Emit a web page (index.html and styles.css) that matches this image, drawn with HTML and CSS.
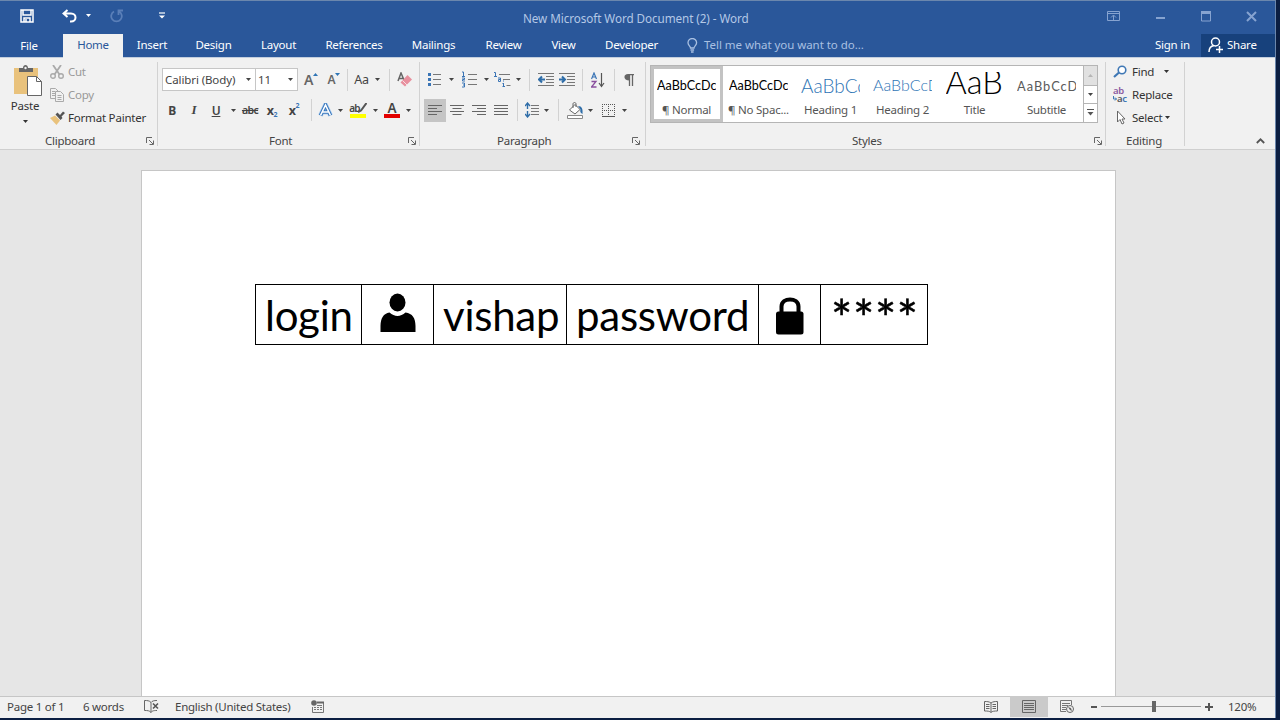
FILE: index.html
```html
<!DOCTYPE html>
<html lang="en">
<head>
  <meta charset="UTF-8" />
  <meta name="viewport" content="width=device-width, initial-scale=1" />
  <title>New Microsoft Word Document (2) - Word</title>
  <link rel="stylesheet" href="styles.css">
</head>
<body>
  <svg class="defs" width="0" height="0">
    <symbol id="caret" viewBox="0 0 5 3"><path d="M0 0h5L2.500 3z" fill="currentColor"/></symbol>
    <symbol id="launcher" viewBox="0 0 8 8"><path d="M.5 6V.5H6M3 3l4 4M7.500 3.500v4h-4" fill="none" stroke="#666"/></symbol>
  </svg>

  <div class="window">
    <header class="titlebar">
      <div class="quick">
        <svg class="save" width="14" height="14" viewBox="0 0 14 14"><path d="M1 1h12v12H1zM3 1v5h8V1M4 13V9h6v4M6 10v3" fill="none" stroke="#fff" stroke-width="1.500"/></svg>
        <svg class="undo" width="15" height="14" viewBox="0 0 15 14"><path d="M5.500 1L1.500 4.500l4 3.500M2 4.500h7c6 0 6 8 0 8H8" fill="none" stroke="#fff" stroke-width="2"/></svg>
        <svg class="undo-caret" width="5" height="3"><use href="#caret"/></svg>
        <svg class="redo" width="14" height="14" viewBox="0 0 14 14"><path d="M9 2.500A5.300 5.300 0 1 1 4 2.500M8.500 6V1.500H13" fill="none" stroke="#5a7fb8" stroke-width="1.800"/></svg>
        <svg width="6" height="7" viewBox="0 0 6 7"><path d="M0 1h6" stroke="#fff" stroke-width="1.200"/><path d="M0 3.500h6L3 6.500z" fill="#fff"/></svg>
      </div>
      <div class="title">New Microsoft Word Document (2) - Word</div>
      <div class="controls">
        <svg width="14" height="11" viewBox="0 0 14 11"><path d="M.5.5h12v9H.5zM.5 2.500h12M6.500 9V4.500M4 6.500L6.500 4 9 6.500" fill="none" stroke="currentColor"/></svg>
        <svg width="10" height="11" viewBox="0 0 10 11"><path d="M0 7h9" stroke="currentColor" stroke-width="2"/></svg>
        <svg width="10" height="11" viewBox="0 0 10 11"><path d="M.5 1v9h9V1" fill="none" stroke="currentColor"/><path d="M0 1.500h10" stroke="currentColor" stroke-width="3"/></svg>
        <svg width="11" height="11" viewBox="0 0 11 11"><path d="M1 1l9 9M10 1l-9 9" stroke="currentColor" stroke-width="2"/></svg>
      </div>
    </header>

    <nav class="tabs">
      <span class="tab file">File</span>
      <span class="tab home">Home</span>
      <span class="tab insert">Insert</span>
      <span class="tab design">Design</span>
      <span class="tab layout">Layout</span>
      <span class="tab references">References</span>
      <span class="tab mailings">Mailings</span>
      <span class="tab review">Review</span>
      <span class="tab view">View</span>
      <span class="tab developer">Developer</span>
      <span class="tell">
        <svg width="11" height="15" viewBox="0 0 11 15"><path d="M3.500 10C3.500 8 1 7.500 1 4.800a4.300 4.300 0 0 1 8.600 0C9.600 7.500 7 8 7 10zM3.500 12h3.600M4 14h2.600" fill="none" stroke="#a9c0e2" stroke-width="1.300"/></svg>
        Tell me what you want to do...
      </span>
      <span class="signin">Sign in</span>
      <span class="share">
        <svg width="15" height="16" viewBox="0 0 15 16"><circle cx="7.500" cy="5" r="4" fill="none" stroke="#fff" stroke-width="1.500"/><path d="M1 15c0-4 2-6 5-6.500M8 12.500h7M11.500 9v7" fill="none" stroke="#fff" stroke-width="1.500"/></svg>
        Share
      </span>
    </nav>

    <section class="ribbon">
      <div class="group clipboard">
        <div class="body">
          <div class="paste">
            <svg width="29" height="31" viewBox="0 0 29 31"><path d="M1 3h24v26H1z" fill="#e9c27c"/><path d="M6 7V3h4c0-4 5-4 5 0h5v4z" fill="#666"/><circle cx="12.500" cy="3" r="1.200" fill="#f1f1f1"/><path d="M14.500 11.500h9l5 5v14h-14z" fill="#fff" stroke="#666"/><path d="M23.500 11.500v5h5" fill="none" stroke="#666"/></svg>
            <span>Paste</span>
            <svg width="5" height="3"><use href="#caret"/></svg>
          </div>
          <div class="list">
            <div class="cmd off">
              <svg width="14" height="14" viewBox="0 0 14 14"><path d="M3 0l6.500 9.500M11 0L4.500 9.500" stroke="#aaa" stroke-width="1.800"/><circle cx="3" cy="11" r="2.300" fill="none" stroke="#aaa" stroke-width="1.400"/><circle cx="11" cy="11" r="2.300" fill="none" stroke="#aaa" stroke-width="1.400"/></svg>
              Cut
            </div>
            <div class="cmd off">
              <svg width="14" height="14" viewBox="0 0 14 14"><path d="M5 10.500H.5V.5h5L8 3M2 3.500h3M2 5.500h3M2 7.500h3" fill="none" stroke="#aaa"/><path d="M5.500 3.500h5l3 3v7h-8z" fill="#f1f1f1" stroke="#aaa"/><path d="M7.500 7.500h4M7.500 9.500h4M7.500 11.500h4" stroke="#aaa"/></svg>
              Copy
            </div>
            <div class="cmd painter">
              <svg width="15" height="14" viewBox="0 0 15 14"><path d="M0 7l5-2.500 5 5L6.500 14z" fill="#e9c27c"/><path d="M5.500 3.500l2-2L10 4l3-3.500L15 2l-3.500 3.500 1 1.500-2 2z" fill="#555"/></svg>
              Format Painter
            </div>
          </div>
        </div>
        <div class="label">Clipboard<svg width="8" height="8"><use href="#launcher"/></svg></div>
      </div>

      <div class="group font">
        <div class="row first">
          <span class="combo name">Calibri (Body)<svg width="5" height="3"><use href="#caret"/></svg></span>
          <span class="combo size">11<svg width="5" height="3"><use href="#caret"/></svg></span>
          <span class="slot w26 grow">A<svg width="5" height="3" viewBox="0 0 5 3"><path d="M0 3h5L2.500 0z" fill="#2e75b6"/></svg></span>
          <span class="slot w20 shrink">A<svg width="5" height="3" viewBox="0 0 5 3"><path d="M0 0h5L2.500 3z" fill="#2e75b6"/></svg></span>
          <span class="slot w6"><i class="sep"></i></span>
          <span class="slot w23 case">Aa</span>
          <span class="slot w9"><svg width="5" height="3"><use href="#caret"/></svg></span>
          <span class="slot w14"><i class="sep"></i></span>
          <span class="slot w17"><svg width="15" height="15" viewBox="0 0 15 15"><path d="M1 9L4 1l3 7M2 6.500h4" fill="none" stroke="#666" stroke-width="1.500"/><path d="M3.500 10.500L10.500 3l4.500 4.500-7 7z" fill="#e8909e"/><path d="M5.500 8.500l4.500 4.500" stroke="#f7dfe3" stroke-width="1"/></svg></span>
        </div>
        <div class="row">
          <span class="slot w22 bold">B</span>
          <span class="slot w22 italic">I</span>
          <span class="slot w22 underline">U</span>
          <span class="slot w12"><svg width="5" height="3"><use href="#caret"/></svg></span>
          <span class="slot w22 strike">abc</span>
          <span class="slot w22 script">x<sub>2</sub></span>
          <span class="slot w22 script">x<sup>2</sup></span>
          <span class="slot w12"><i class="sep"></i></span>
          <span class="slot w17"><svg width="15" height="15" viewBox="0 0 15 15"><path d="M2.500 12.500L7.500 2l5 10.500M4.500 9h6" fill="none" stroke="#b5d2f0" stroke-width="5"/><path d="M2.500 12.500L7.500 2l5 10.500M4.500 9h6" fill="none" stroke="#3a78bd" stroke-width="3.600"/><path d="M2.500 12.500L7.500 2l5 10.500M4.500 9h6" fill="none" stroke="#fff" stroke-width="1.600"/></svg></span>
          <span class="slot w12"><svg width="5" height="3"><use href="#caret"/></svg></span>
          <span class="slot w24 mark yellow">ab<svg width="9" height="10" viewBox="0 0 9 10"><path d="M8.500 0L3 7.500 0 9" fill="none" stroke="#555" stroke-width="2"/></svg></span>
          <span class="slot w10"><svg width="5" height="3"><use href="#caret"/></svg></span>
          <span class="slot w24 mark red">A</span>
          <span class="slot w8"><svg width="5" height="3"><use href="#caret"/></svg></span>
        </div>
        <div class="label">Font<svg width="8" height="8"><use href="#launcher"/></svg></div>
      </div>

      <div class="group paragraph">
        <div class="row first">
          <span class="slot w22"><svg width="14" height="15" viewBox="0 0 14 15"><path d="M5 2.500h8M5 7.500h8M5 12.500h8" stroke="#777"/><path d="M0 2.500h3M0 7.500h3M0 12.500h3" stroke="#3a74b5" stroke-width="3"/></svg></span>
          <span class="slot w10"><svg width="5" height="3"><use href="#caret"/></svg></span>
          <span class="slot w26"><svg width="15" height="17" viewBox="0 0 15 17"><path d="M6 3.500h9M6 8.500h9M6 13.500h9" stroke="#777"/><path d="M0 1h1.500v4M0 5.500h3M0 7h2.500v1.500H.5V10H3M0 12h2.500v4H0M1 14h1.500" fill="none" stroke="#3a74b5"/></svg></span>
          <span class="slot w8"><svg width="5" height="3"><use href="#caret"/></svg></span>
          <span class="slot w24"><svg width="17" height="17" viewBox="0 0 17 17"><path d="M5 3.500h11M9 8.500h7M12.500 14.500h4" stroke="#777"/><path d="M0 1.500h1.500v4M0 5.500h3M4 7h2.500v3.500H4.500v-2h2M9.500 9.500v1M9.500 12v4M8.500 12.500h1M8.500 15.500H11" fill="none" stroke="#3a74b5"/></svg></span>
          <span class="slot w8"><svg width="5" height="3"><use href="#caret"/></svg></span>
          <span class="slot w14"><i class="sep"></i></span>
          <span class="slot w20"><svg width="16" height="14" viewBox="0 0 16 14"><path d="M0 .5h16M8 3.500h8M8 6.500h8M8 9.500h8M0 12.500h16" stroke="#777"/><path d="M7 6.500H1M4 3.500l-3 3 3 3" fill="none" stroke="#2e6da8" stroke-width="2"/></svg></span>
          <span class="slot w22"><svg width="16" height="14" viewBox="0 0 16 14"><path d="M0 .5h16M8 3.500h8M8 6.500h8M8 9.500h8M0 12.500h16" stroke="#777"/><path d="M0 6.500h6M3 3.500l3 3-3 3" fill="none" stroke="#2e6da8" stroke-width="2"/></svg></span>
          <span class="slot w8"><i class="sep"></i></span>
          <span class="slot w24"><svg width="14" height="16" viewBox="0 0 14 16"><path d="M.5 7L3 1l2.500 6M1.500 5h3" fill="none" stroke="#3a74b5" stroke-width="1.200"/><path d="M.5 9.500H5L.5 15H5.500" fill="none" stroke="#8a4f9e" stroke-width="1.300"/><path d="M10.500 1v13M8 11l2.500 3.500L13 11" fill="none" stroke="#555" stroke-width="1.200"/></svg></span>
          <span class="slot w8"><i class="sep"></i></span>
          <span class="slot w22"><svg width="10" height="12" viewBox="0 0 10 12"><path d="M5 .5H10M5.500 0v12M8.500 0v12" stroke="#666" stroke-width="1.300"/><path d="M5.500 0v6.500C-1 6.500-1 0 4 0z" fill="#666"/></svg></span>
        </div>
        <div class="row">
          <span class="slot w22 pressed"><svg width="14" height="12" viewBox="0 0 14 12"><path d="M0 1.500h14M0 4.500h9M0 7.500h14M0 10.500h9" stroke="#666"/></svg></span>
          <span class="slot w22"><svg width="14" height="12" viewBox="0 0 14 12"><path d="M0 1.500h14M2.500 4.500h9M0 7.500h14M2.500 10.500h9" stroke="#666"/></svg></span>
          <span class="slot w22"><svg width="14" height="12" viewBox="0 0 14 12"><path d="M0 1.500h14M5 4.500h9M0 7.500h14M5 10.500h9" stroke="#666"/></svg></span>
          <span class="slot w22"><svg width="14" height="12" viewBox="0 0 14 12"><path d="M0 1.500h14M0 4.500h14M0 7.500h14M0 10.500h14" stroke="#666"/></svg></span>
          <span class="slot w10"><i class="sep"></i></span>
          <span class="slot w20"><svg width="14" height="16" viewBox="0 0 14 16"><path d="M6 3.500h8M6 6.500h8M6 9.500h8M6 12.500h8" stroke="#777"/><path d="M2.500 1v14M0 4l2.500-3L5 4M0 12l2.500 3L5 12" fill="none" stroke="#2e6da8" stroke-width="1.400"/><path d="M1 8h3" stroke="#f1f1f1" stroke-width="2"/></svg></span>
          <span class="slot w8"><svg width="5" height="3"><use href="#caret"/></svg></span>
          <span class="slot w16"><i class="sep"></i></span>
          <span class="slot w18"><svg width="17" height="17" viewBox="0 0 17 17"><path d="M2.500 8L8 2.500l5 5L8 12z" fill="#fff" stroke="#666"/><path d="M6 6V2c0-2 3-2 3 0v3" fill="none" stroke="#666"/><path d="M11 4c4 0 5 3 4.500 8-2.500-1-2.500-3-2-4.500z" fill="#2e6da8"/><path d="M.5 13.500h15v3H.5z" fill="#fff" stroke="#888"/></svg></span>
          <span class="slot w12"><svg width="5" height="3"><use href="#caret"/></svg></span>
          <span class="slot w24"><svg width="13" height="13" viewBox="0 0 13 13"><path d="M.5 0v12M6.500 0v12M12.500 0v12M0 .5h13M0 6.500h13" stroke="#555" stroke-dasharray="1 1"/><path d="M0 12.500h13" stroke="#555"/></svg></span>
          <span class="slot w8"><svg width="5" height="3"><use href="#caret"/></svg></span>
        </div>
        <div class="label">Paragraph<svg width="8" height="8"><use href="#launcher"/></svg></div>
      </div>

      <div class="group styles">
        <div class="gallery">
          <div class="style selected"><div class="preview">AaBbCcDc</div><span>¶ Normal</span></div>
          <div class="style"><div class="preview">AaBbCcDc</div><span>¶ No Spac...</span></div>
          <div class="style"><div class="preview h1">AaBbCc</div><span>Heading 1</span></div>
          <div class="style"><div class="preview h2">AaBbCcD</div><span>Heading 2</span></div>
          <div class="style"><div class="preview big">AaB</div><span>Title</span></div>
          <div class="style"><div class="preview sub">AaBbCcD</div><span>Subtitle</span></div>
          <div class="scroller">
            <span class="disabled"><svg width="5" height="3" viewBox="0 0 5 3"><path d="M0 3h5L2.500 0z" fill="#b5b5b5"/></svg></span>
            <span><svg width="5" height="3"><use href="#caret"/></svg></span>
            <span><svg width="7" height="7" viewBox="0 0 7 7"><path d="M0 .5h7" stroke="#555"/><path d="M.5 3h6l-3 3.500z" fill="#555"/></svg></span>
          </div>
        </div>
        <div class="label">Styles<svg width="8" height="8"><use href="#launcher"/></svg></div>
      </div>

      <div class="group editing">
        <div class="list">
          <div class="cmd find">
            <svg width="16" height="14" viewBox="0 0 16 14"><circle cx="9" cy="5" r="3.800" fill="#fff" stroke="#3f78b5" stroke-width="1.600"/><path d="M6 7.500L1 12" stroke="#3f78b5" stroke-width="2.200"/></svg>
            Find
            <svg class="arrow" width="5" height="3"><use href="#caret"/></svg>
          </div>
          <div class="cmd">
            <span class="swap"><b>ab</b><b class="to"><svg width="4" height="5" viewBox="0 0 4 5"><path d="M.5 0v3h3M2 1.500L3.500 3 2 4.500" fill="none" stroke="#3f78b5"/></svg>a<em>c</em></b></span>
            Replace
          </div>
          <div class="cmd">
            <svg width="16" height="15" viewBox="0 0 16 15"><path d="M4.500 1v11l2.500-2.500 2 4.500 2-1-2-4h3z" fill="#fff" stroke="#666"/></svg>
            Select
            <svg class="arrow" width="5" height="3"><use href="#caret"/></svg>
          </div>
        </div>
        <div class="label">Editing</div>
      </div>

      <svg class="collapse" width="9" height="6" viewBox="0 0 9 6"><path d="M.8 5l3.700-3.700L8.200 5" fill="none" stroke="#555" stroke-width="1.800"/></svg>
    </section>

    <main class="workspace">
      <div class="page">
        <table class="login">
          <tr>
            <td class="c-login">login</td>
            <td class="c-user"><svg width="36" height="40" viewBox="0 0 36 40"><ellipse cx="17.500" cy="9.500" rx="8" ry="9"/><path d="M.5 39V33c0-8 3-12.500 9-13.500 5 4.500 11 4.500 16 0 7 1 10 5.500 10 13.500v6z"/></svg></td>
            <td class="c-name">vishap</td>
            <td class="c-pass">password</td>
            <td class="c-lock"><svg width="28" height="38" viewBox="0 0 28 38"><path d="M5.500 16V9.500c0-9.500 17-9.500 17 0V16" fill="none" stroke="#000" stroke-width="4"/><rect x="0" y="14.500" width="27.500" height="23" rx="2.500"/></svg></td>
            <td class="c-stars">****</td>
          </tr>
        </table>
      </div>
    </main>

    <footer class="status">
      <span class="pages">Page 1 of 1</span>
      <span class="words">6 words</span>
      <svg class="proof" width="15" height="13" viewBox="0 0 15 13"><path d="M7 2.500C5.500.5 3 .5.500.5v10c3 0 5 0 6.500 2zM7 2.500C8 1 10 .5 13 .5M7 12.500c1-1.500 2-2 6-2" fill="none" stroke="#666"/><path d="M9 3.500l5 5M14 3.500l-5 5" stroke="#555" stroke-width="1.600"/></svg>
      <span class="lang">English (United States)</span>
      <svg width="14" height="13" viewBox="0 0 14 13"><path d="M6 2.500h6.500v10h-11V7M3 7.500h2M6 7.500h2M9 7.500h2M3 9.500h2M6 9.500h2M9 9.500h2M6 5.500h5" fill="none" stroke="#777"/><path d="M6 2.500h7" stroke="#666" stroke-width="2"/><circle cx="3" cy="3" r="2.800" fill="#666"/></svg>
      <div class="views">
        <span class="view-btn read"><svg width="14" height="12" viewBox="0 0 14 12"><path d="M7 2C5 .5 3 .5.500.5v9.500c3 0 5 0 6.500 1.500 1.500-1.500 3.500-1.500 6.500-1.500V.5C11 .5 9 .5 7 2zM7 2v9M2 3.500h3.500M2 5.500h3.500M2 7.500h3.500M8.500 3.500H12M8.500 5.500H12M8.500 7.500H12" fill="none" stroke="#666"/></svg></span>
        <span class="view-btn active"><svg width="14" height="13" viewBox="0 0 14 13"><path d="M.5.5h13v12H.5zM2 3.500h10M2 5.500h10M2 7.500h10M2 9.500h10" fill="none" stroke="#666"/></svg></span>
        <span class="view-btn"><svg width="14" height="13" viewBox="0 0 14 13"><path d="M6 11.500H.5V.5h11V5M2 3.500h8M2 5.500h6M2 7.500h4M2 9.500h4" fill="none" stroke="#777"/><circle cx="10" cy="9" r="3.500" fill="#f1f1f1" stroke="#666"/><path d="M8 7l3 1 1 3-2-1z" fill="#666"/></svg></span>
      </div>
      <div class="zoom">
        <i class="minus"></i>
        <div class="track"><i class="thumb"></i></div>
        <svg width="8" height="8" viewBox="0 0 8 8"><path d="M0 4h8M4 0v8" stroke="#555" stroke-width="2"/></svg>
        <span>120%</span>
      </div>
    </footer>
  </div>
</body>
</html>
```
FILE: styles.css
```css
* {
  box-sizing: border-box;
}
body {
  margin: 0;
  width: 1280px;
  height: 720px;
  overflow: hidden;
  background: #0b1e42;
  font-family: "Noto Sans", "Open Sans", sans-serif;
  font-size: 11.5px;
  letter-spacing: -0.25px;
  color: #444;
}
svg {
  display: block;
  flex: none;
}
.defs {
  position: absolute;
}
.window {
  width: 1276px;
  height: 718px;
  display: flex;
  flex-direction: column;
  border-top: 1px solid #6b87ad;
  border-right: 1px solid #6b87ad;
  background: #e6e6e6;
}

/* title bar */
.titlebar {
  height: 33px;
  flex: none;
  display: flex;
  align-items: center;
  background: #2a579a;
  color: #b4c8e6;
}
.quick {
  width: 523px;
  display: flex;
  align-items: center;
  padding: 0 0 4px 20px;
}
.undo {
  margin-left: 28px;
}
.undo-caret {
  color: #fff;
  margin-left: 9px;
}
.redo {
  margin: 0 35px 0 19px;
}
.title {
  width: 584px;
  padding-top: 1px;
  white-space: nowrap;
  font-size: 11.7px;
  letter-spacing: -0.07px;
}
.controls {
  display: flex;
  justify-content: space-between;
  width: 150px;
  padding-bottom: 2px;
  color: #86a3d0;
}

/* tabs */
.tabs {
  height: 24px;
  flex: none;
  display: flex;
  background: #2a579a;
  border-bottom: 1px solid #c3cede;
  color: #fff;
  line-height: 22px;
  white-space: nowrap;
}
.tab {
  text-align: center;
}
.file {
  width: 63px;
  padding: 1px 5px 0 0;
}
.home {
  width: 60px;
  height: 24px;
  background: #f1f1f1;
  color: #2a579a;
}
.insert {
  width: 58px;
}
.design {
  width: 65px;
}
.layout {
  width: 65px;
}
.references {
  width: 86px;
}
.mailings {
  width: 73px;
}
.review {
  width: 67px;
}
.view {
  width: 53px;
}
.developer {
  width: 83px;
}
.tell {
  width: 482px;
  height: 22px;
  padding-left: 14px;
  display: flex;
  align-items: center;
  gap: 6px;
  color: #a9c0e2;
  letter-spacing: -0.04px;
}
.signin {
  width: 46px;
}
.share {
  flex: 1;
  height: 23px;
  padding: 0 0 1px 7px;
  display: flex;
  align-items: center;
  gap: 4px;
  background: #17417c;
}

/* ribbon */
.ribbon {
  height: 92px;
  flex: none;
  display: flex;
  background: #f1f1f1;
  border-bottom: 1px solid #cfcfcf;
}
.group {
  margin: 4px 0 3px;
  padding-top: 3px;
  border-right: 1px solid #d2d2d2;
  display: flex;
  flex-direction: column;
  white-space: nowrap;
}
.label {
  display: flex;
  justify-content: space-between;
  align-items: center;
  height: 16px;
  margin: auto 0 -2px;
}
.label svg {
  margin: 1px 3px 0 0;
}
.clipboard {
  width: 158px;
}
.font {
  width: 262px;
  padding-left: 3px;
}
.paragraph {
  width: 226px;
  padding-left: 4px;
}
.styles {
  width: 460px;
}
.editing {
  width: 79px;
}
.clipboard .label {
  padding-left: 45px;
}
.font .label {
  padding-left: 108px;
}
.paragraph .label {
  padding-left: 73px;
}
.paragraph .label svg {
  margin-right: 5px;
}
.styles .label {
  padding-left: 206px;
}
.editing .label {
  padding-left: 20px;
}

.body {
  display: flex;
}
.paste {
  width: 50px;
  display: flex;
  flex-direction: column;
  align-items: center;
  color: #333;
}
.paste span {
  line-height: 16px;
  margin: 2px 0 6px;
}
.paste > svg:first-child {
  margin-left: 4px;
}
.cmd {
  height: 23px;
  display: flex;
  align-items: center;
  gap: 4px;
  color: #333;
}
.clipboard .list,
.editing .list {
  margin-top: -5px;
}
.off {
  color: #999;
}
.painter {
  gap: 3px;
  letter-spacing: -0.2px;
}
.editing .list {
  padding-left: 7px;
}
.editing .cmd {
  gap: 3px;
}
.find .arrow {
  margin-left: 7px;
}
.swap {
  width: 16px;
  display: flex;
  flex-direction: column;
  font-size: 9.5px;
  line-height: 8px;
  color: #8a5aa0;
}
.swap b {
  font-weight: 600;
}
.swap .to {
  display: flex;
  align-items: center;
  color: #555;
}
.swap em {
  font-style: normal;
  color: #3f78b5;
}

.row {
  height: 30px;
  display: flex;
  align-items: center;
}
.first {
  height: 29px;
  margin-bottom: 1px;
}
.slot {
  flex: none;
  display: flex;
  justify-content: center;
  align-items: center;
}
.w6 { width: 6px; }
.w8 { width: 8px; }
.w9 { width: 9px; }
.w10 { width: 10px; }
.w12 { width: 12px; }
.w14 { width: 14px; }
.w16 { width: 16px; }
.w17 { width: 17px; }
.w18 { width: 18px; }
.w20 { width: 20px; }
.w22 { width: 22px; }
.w23 { width: 23px; }
.w24 { width: 24px; }
.w26 { width: 26px; }
.sep {
  width: 1px;
  height: 22px;
  background: #d2d2d2;
}
.combo {
  height: 23px;
  padding: 0 4px 0 2px;
  display: flex;
  align-items: center;
  justify-content: space-between;
  background: #fff;
  border: 1px solid #c6c6c6;
  letter-spacing: -0.1px;
}
.name {
  width: 94px;
  margin-left: 1px;
}
.size {
  width: 43px;
  margin-left: -1px;
}
.grow,
.shrink {
  font-size: 14px;
  font-weight: 600;
  color: #666;
}
.grow svg,
.shrink svg {
  margin-bottom: 10px;
}
.shrink {
  font-size: 12px;
}
.case {
  font-size: 12.5px;
}
.bold {
  font-weight: 700;
  font-size: 12px;
}
.italic {
  font: italic 700 13px "Liberation Serif", serif;
}
.underline {
  font-weight: 600;
  font-size: 12px;
  text-decoration: underline;
}
.strike {
  font-size: 10.5px;
  font-weight: 600;
  letter-spacing: -0.6px;
  text-decoration: line-through;
}
.script {
  font-size: 12.5px;
  font-weight: 700;
}
.script sub,
.script sup {
  font-size: 7px;
  color: #3a74b5;
}
.script sub {
  margin-top: 9px;
}
.script sup {
  margin-bottom: 9px;
}
.mark {
  height: 16px;
  border-bottom: 4px solid;
  width: 16px;
  margin: 0 4px;
}
.yellow {
  font-size: 10px;
  line-height: 10px;
  font-weight: 600;
  letter-spacing: -0.8px;
  border-color: #ffff00;
}
.yellow svg {
  margin-left: -2px;
}
.red {
  font-size: 13.5px;
  font-weight: 600;
  border-color: #e30000;
}
.pressed {
  height: 23px;
  background: #c5c5c5;
}

.gallery {
  width: 448px;
  height: 58px;
  margin-left: 4px;
  display: flex;
  background: #fff;
  border: 1px solid #b5b5b5;
}
.style {
  width: 72px;
  height: 56px;
  padding-right: 1px;
  display: flex;
  flex-direction: column;
  align-items: center;
  color: #555;
}
.selected {
  outline: 3px solid #c3c3c3;
  outline-offset: -3px;
}
.style span {
  line-height: 16px;
}
.preview {
  width: 59px;
  height: 36px;
  overflow: hidden;
  font-family: Lato, sans-serif;
  font-size: 12.6px;
  line-height: 40px;
  letter-spacing: 0;
  color: #000;
}
.h1 {
  font-size: 19px;
  line-height: 39px;
  font-weight: 300;
  color: #2e74b5;
}
.h2 {
  font-size: 16px;
  line-height: 38px;
  font-weight: 300;
  color: #2e74b5;
}
.big {
  width: 58px;
  height: 30px;
  margin: 6px 0 0;
  font-size: 32.5px;
  line-height: 20px;
  font-weight: 300;
}
.sub {
  font-size: 12.8px;
  letter-spacing: 1px;
  color: #5a5a5a;
}
.scroller {
  width: 14px;
  border-left: 1px solid #b5b5b5;
}
.scroller span {
  height: 18px;
  display: flex;
  justify-content: center;
  align-items: center;
  border-top: 1px solid #b5b5b5;
}
.scroller .disabled {
  height: 19px;
  border-top: 0;
  background: #e1e1e1;
}
.collapse {
  margin: 80px 0 0 71px;
}

/* document */
.workspace {
  flex: 1;
  overflow: hidden;
  padding: 20px 0 0 141px;
  background: #e6e6e6;
}
.page {
  width: 975px;
  height: 600px;
  padding: 113px 0 0 113px;
  background: #fff;
  border: 1px solid #c6c6c6;
}
.login {
  width: 672px;
  height: 61px;
  table-layout: fixed;
  border-collapse: collapse;
  font: 42px/48px Lato, sans-serif;
  letter-spacing: -0.25px;
  color: #000;
}
.login td {
  height: 60px;
  padding: 0 0 0 9px;
  border: 1px solid #000;
}
.login .c-login {
  width: 106px;
}
.login .c-user {
  width: 72px;
  padding: 0 0 4px 18px;
}
.c-name {
  width: 133px;
}
.c-pass {
  width: 192px;
}
.login .c-lock {
  width: 62px;
  padding: 3px 0 0 17px;
}
.login .c-stars {
  width: 107px;
  padding: 7px 0 0 10px;
  font-size: 50px;
  letter-spacing: 0.7px;
  -webkit-text-stroke: 0.5px #000;
}

/* status bar */
.status {
  height: 22px;
  flex: none;
  display: flex;
  align-items: center;
  padding: 0 0 2px 7px;
  background: #f1f1f1;
  border-top: 1px solid #c6c6c6;
  white-space: nowrap;
}
.pages {
  width: 76px;
}
.words {
  width: 61px;
}
.lang {
  width: 136px;
  margin-left: 15px;
}
.proof {
  margin-right: 1px;
}
.views {
  margin-left: 647px;
  display: flex;
}
.view-btn {
  width: 38px;
  height: 21px;
  display: flex;
  justify-content: center;
  align-items: center;
}
.active {
  background: #cacaca;
}
.zoom {
  margin-left: 5px;
  display: flex;
  align-items: center;
}
.minus {
  width: 6px;
  height: 2px;
  background: #555;
}
.track {
  width: 100px;
  height: 11px;
  margin: 0 4px;
  display: flex;
  justify-content: center;
  background: linear-gradient(#999, #999) 0 5px / 100% 1px no-repeat;
}
.thumb {
  width: 4px;
  margin-left: 5px;
  background: #666;
}
.zoom span {
  margin-left: 15px;
}
```
